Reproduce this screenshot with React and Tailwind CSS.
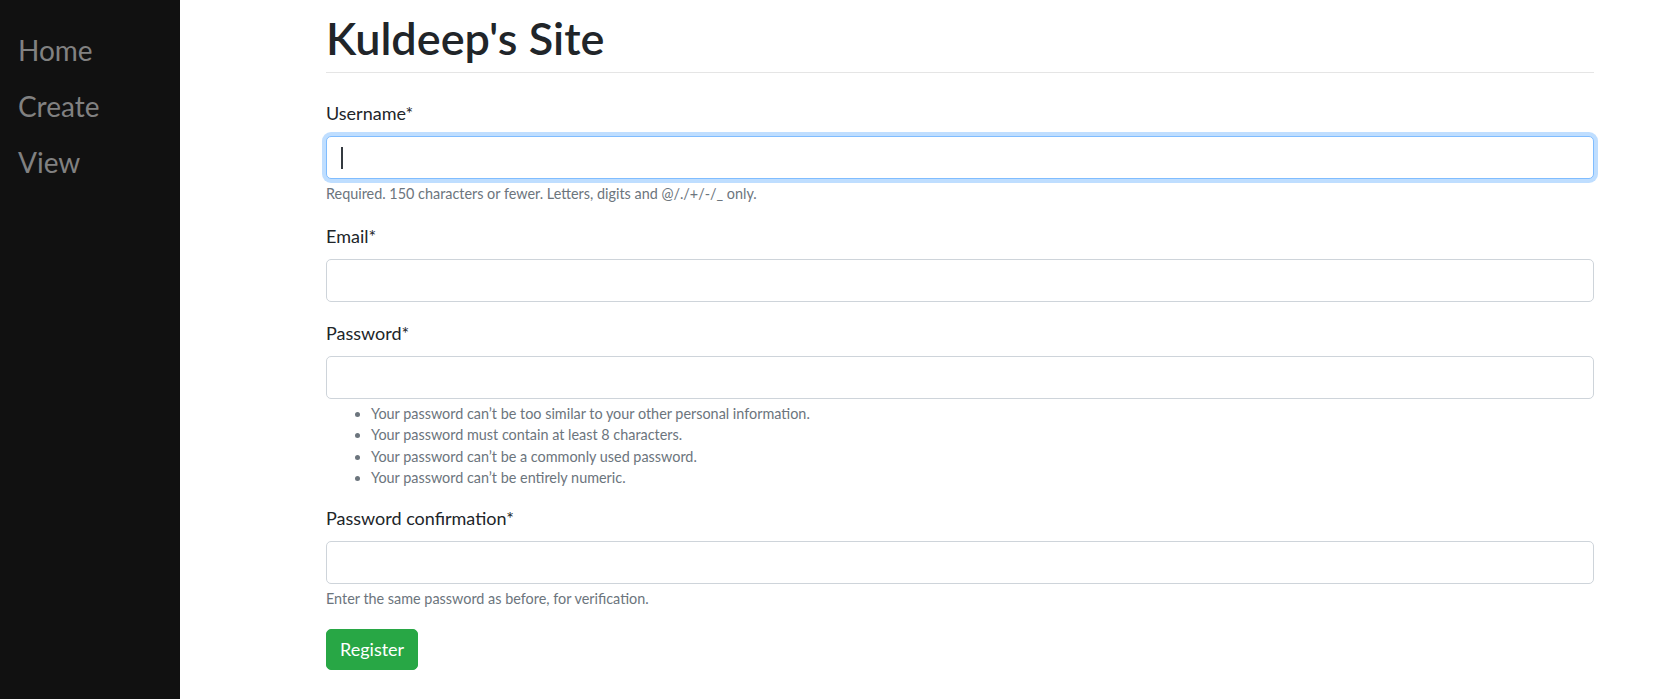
import React from 'react';

// Sidebar + Bootstrap-like register form, page rendered at ~112.5% zoom

const navLinks = ['Home', 'Create', 'View'];

const passwordRules = [
  'Your password can’t be too similar to your other personal information.',
  'Your password must contain at least 8 characters.',
  'Your password can’t be a commonly used password.',
  'Your password can’t be entirely numeric.',
];

const Label = ({ children }) => (
  <label className="block text-[18px] leading-[27px] text-[#212529] mb-[9px]">{children}</label>
);

const Input = ({ type = 'text' }) => (
  <input
    type={type}
    readOnly
    className="block w-full h-[43px] rounded-[5px] border border-[#ced4da] bg-white px-[13px] text-[18px] text-[#495057] outline-none"
  />
);

const Help = ({ children }) => (
  <small className="block mt-[4px] text-[14.4px] leading-[21.6px] text-[#6c757d]">{children}</small>
);

export default function App() {
  return (
    <div className="flex min-h-screen bg-white font-['Lato',sans-serif]">
      <nav className="w-[180px] shrink-0 bg-[#111111] pt-[22px]">
        {navLinks.map((link) => (
          <a key={link} href="#" className="block pl-[18px] pr-[9px] py-[7px] text-[28px] leading-[42px] text-[#818181]">
            {link}
          </a>
        ))}
      </nav>

      <main className="ml-[146px] w-[1270px]">
        <div className="pt-[11px] pb-[7px] border-b border-[#e5e5e5] w-[1268px]">
          <h1 className="text-[45px] leading-[54px] font-semibold text-[#212529]">Kuldeep's Site</h1>
        </div>

        <form className="mt-[27px] w-[1268px]">
          {/* Username, focused */}
          <div className="mb-[18px]">
            <Label>Username*</Label>
            <div className="flex items-center h-[43px] rounded-[5px] border border-[#80bdff] bg-white px-[14px] shadow-[0_0_0_4px_rgba(0,123,255,0.25)]">
              <span className="block w-[2px] h-[22px] bg-[#343a40]"></span>
            </div>
            <Help>Required. 150 characters or fewer. Letters, digits and @/./+/-/_ only.</Help>
          </div>

          <div className="mb-[18px]">
            <Label>Email*</Label>
            <Input type="email" />
          </div>

          <div className="mb-[16px]">
            <Label>Password*</Label>
            <Input type="password" />
            <small className="block mt-[4px] text-[14.4px] leading-[21.6px] text-[#6c757d]">
              <ul className="list-disc pl-[45px]">
                {passwordRules.map((rule) => (
                  <li key={rule}>{rule}</li>
                ))}
              </ul>
            </small>
          </div>

          <div className="mb-[19px]">
            <Label>Password confirmation*</Label>
            <Input type="password" />
            <Help>Enter the same password as before, for verification.</Help>
          </div>

          <button
            type="button"
            className="rounded-[5px] border border-[#28a745] bg-[#28a745] px-[13px] py-[6px] text-[18px] leading-[27px] text-white"
          >
            Register
          </button>
        </form>
      </main>
    </div>
  );
}
